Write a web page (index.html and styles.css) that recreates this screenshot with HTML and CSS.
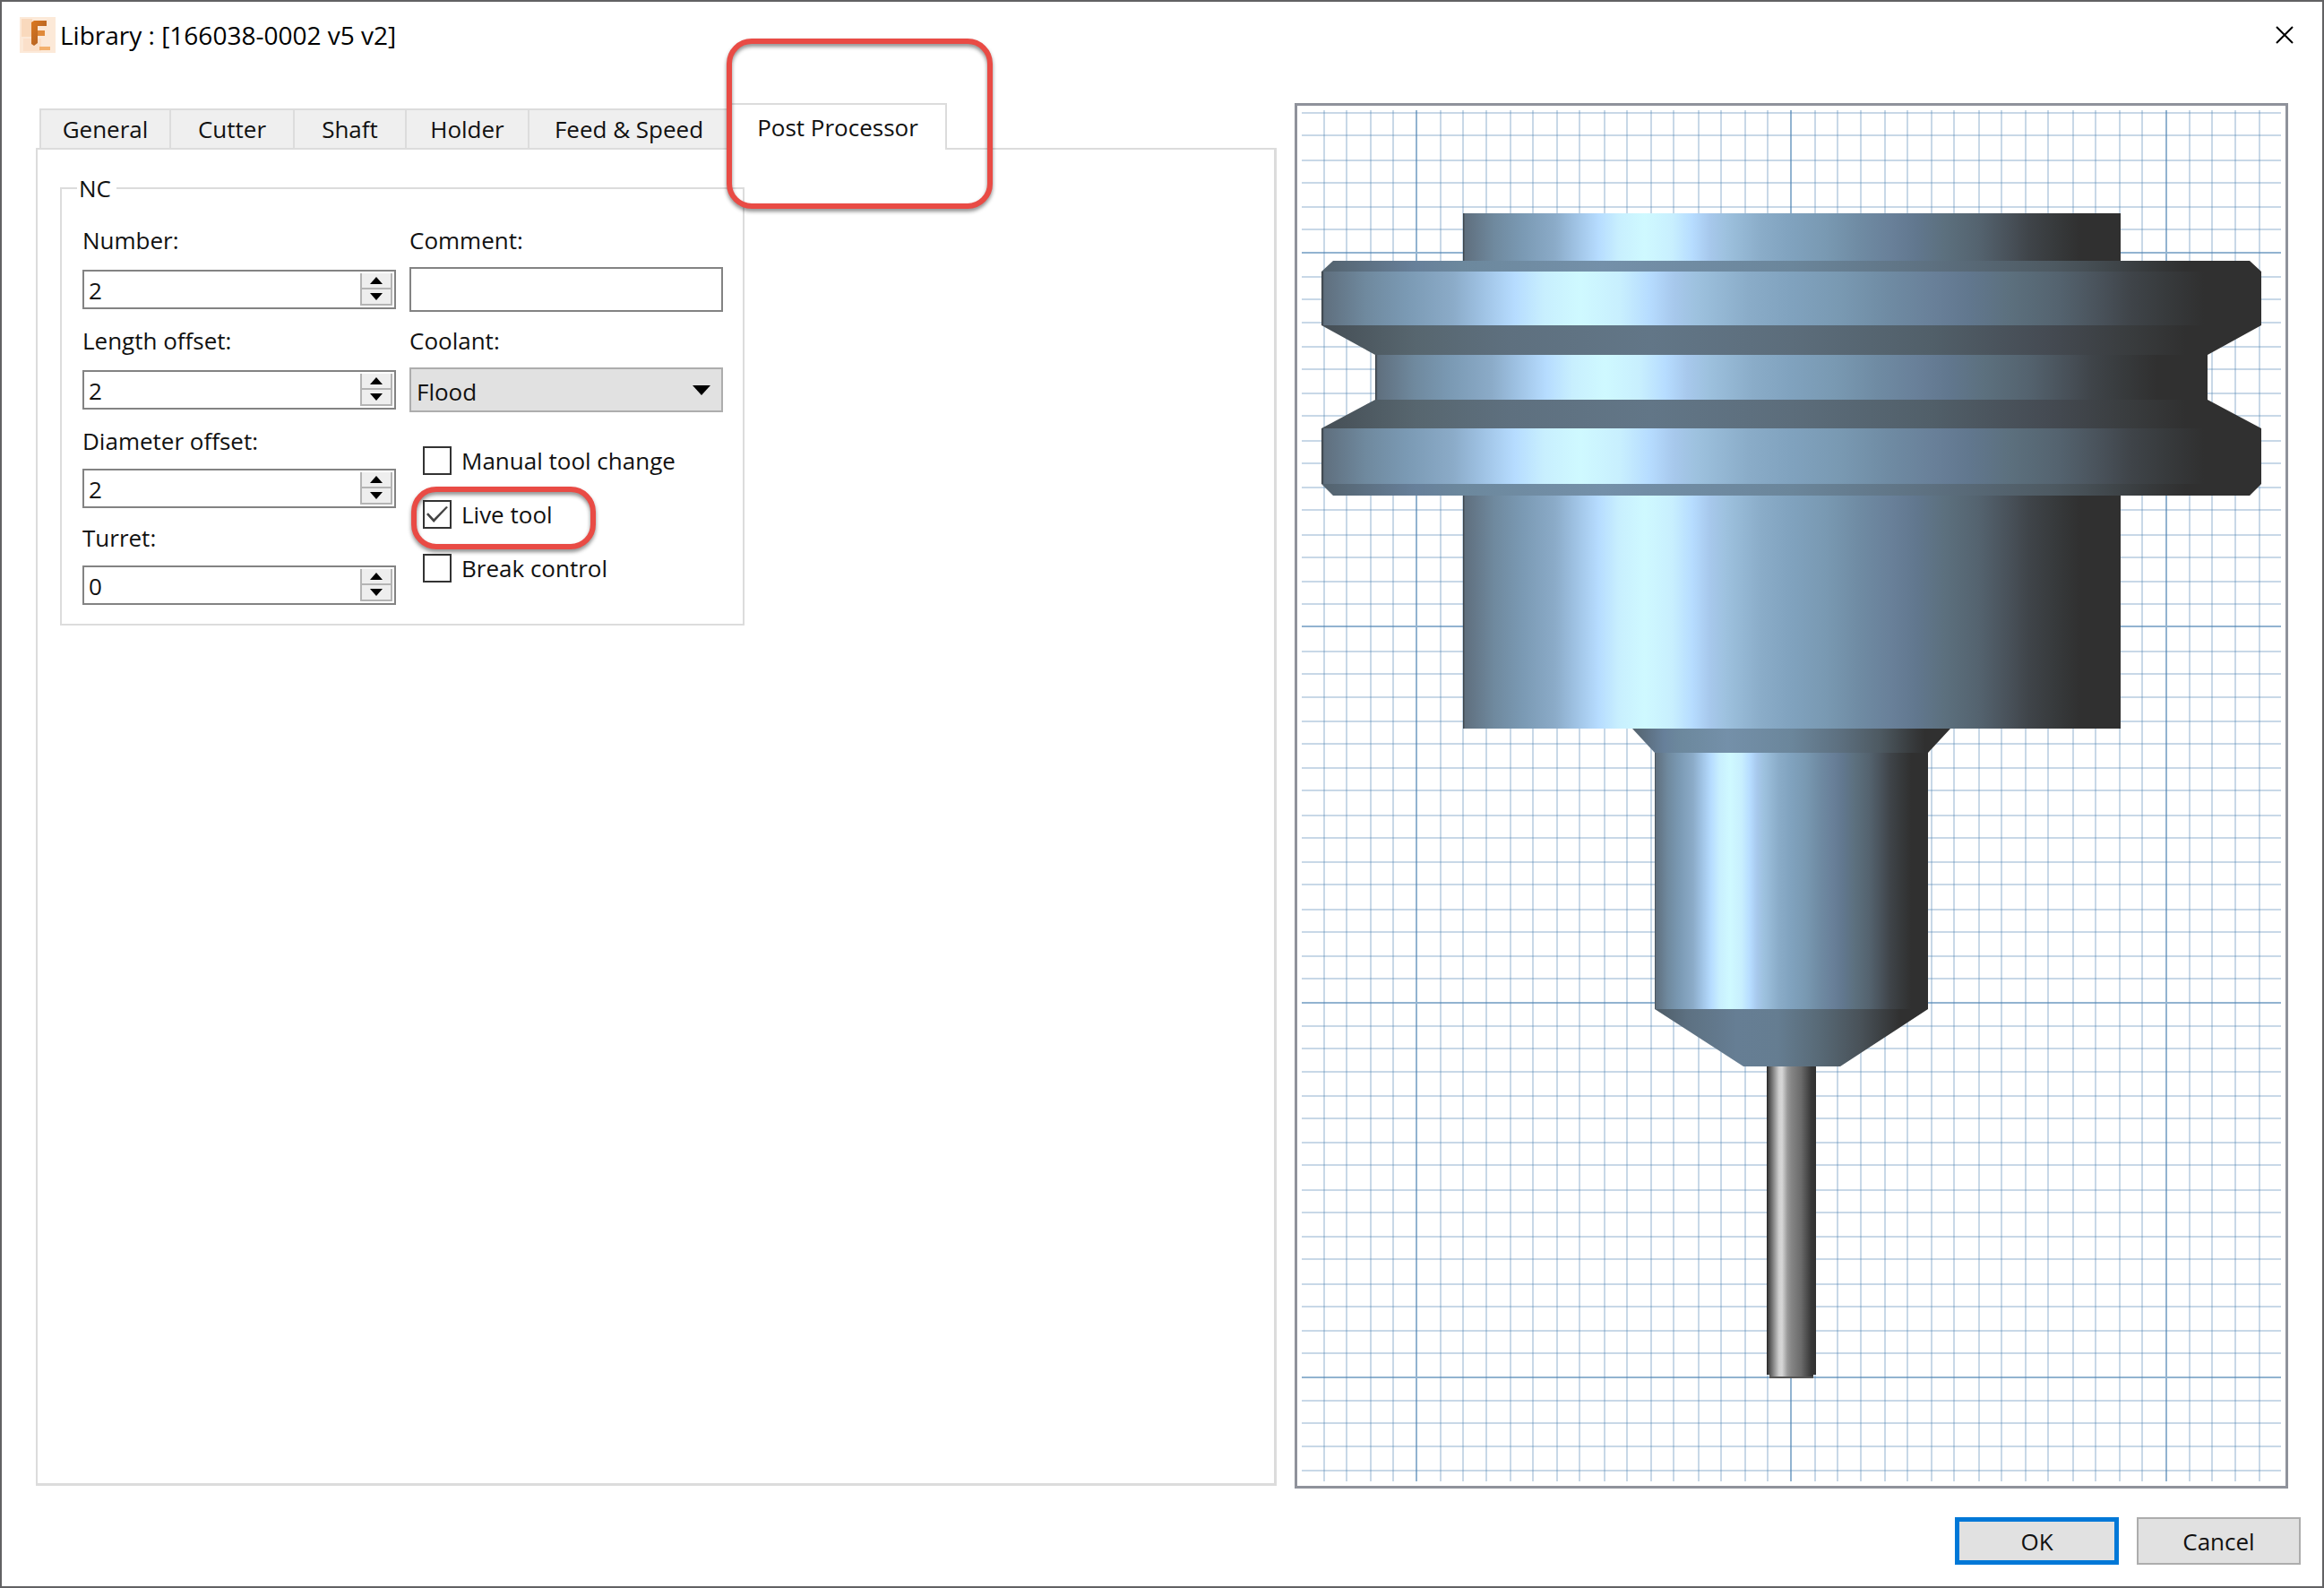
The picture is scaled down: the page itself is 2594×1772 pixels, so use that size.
FILE: index.html
```html
<!DOCTYPE html>
<html lang="en">
<head>
<meta charset="utf-8">
<title>Library : [166038-0002 v5 v2]</title>
<link rel="stylesheet" href="styles.css">
</head>
<body>
<div class="window">
  <header class="titlebar">
    <svg class="app-icon" viewBox="0 0 40 40" aria-hidden="true">
      <defs>
        <linearGradient id="f" x1="0" y1="0" x2="1" y2="1">
          <stop offset="0" stop-color="#dd7a20"/><stop offset="1" stop-color="#a55a24"/>
        </linearGradient>
      </defs>
      <rect width="40" height="40" fill="#fce9d8"/>
      <path d="M2 2h12v20H2z" fill="#f9d9bd"/>
      <path d="M4 24h20v14H4z" fill="#fbe0ca"/>
      <path d="M13 6l3-2h14v6H20v5h8v6h-8v8l-4 3-3-2z" fill="url(#f)"/>
      <path d="M20 15h8v6h-8z" fill="#e08a3a"/>
      <path d="M22 33h12v4H22z" fill="#f3b06c"/>
    </svg>
    <h1 class="title">Library : [166038-0002 v5 v2]</h1>
    <button class="close" type="button" aria-label="Close">
      <svg viewBox="0 0 20 20"><path d="M1 1l18 18M19 1L1 19" fill="none" stroke="#000" stroke-width="2"/></svg>
    </button>
  </header>

  <main class="content">
    <section class="editor">
      <div class="tabs" role="tablist">
        <button class="tab" type="button" role="tab">General</button>
        <button class="tab" type="button" role="tab">Cutter</button>
        <button class="tab" type="button" role="tab">Shaft</button>
        <button class="tab" type="button" role="tab">Holder</button>
        <button class="tab" type="button" role="tab">Feed &amp; Speed</button>
        <button class="tab active marked" type="button" role="tab" aria-selected="true">Post Processor</button>
      </div>
      <div class="pane" role="tabpanel">
        <fieldset class="group">
          <legend>NC</legend>
          <div class="fields">
            <div class="field">
              <label for="number">Number:</label>
              <div class="control"><div class="spin"><input id="number" type="number" value="2"><div class="steps"><button type="button" class="up" aria-label="Increase"></button><button type="button" class="down" aria-label="Decrease"></button></div></div></div>
            </div>
            <div class="field">
              <label for="comment">Comment:</label>
              <div class="control"><input id="comment" class="text" type="text"></div>
            </div>
            <div class="field">
              <label for="length">Length offset:</label>
              <div class="control"><div class="spin"><input id="length" type="number" value="2"><div class="steps"><button type="button" class="up" aria-label="Increase"></button><button type="button" class="down" aria-label="Decrease"></button></div></div></div>
            </div>
            <div class="field">
              <label for="coolant">Coolant:</label>
              <div class="control drop"><select id="coolant"><option>Flood</option></select></div>
            </div>
            <div class="stack">
              <div class="field">
                <label for="diameter">Diameter offset:</label>
                <div class="control"><div class="spin"><input id="diameter" type="number" value="2"><div class="steps"><button type="button" class="up" aria-label="Increase"></button><button type="button" class="down" aria-label="Decrease"></button></div></div></div>
              </div>
              <div class="field">
                <label for="turret">Turret:</label>
                <div class="control"><div class="spin"><input id="turret" type="number" value="0"><div class="steps"><button type="button" class="up" aria-label="Increase"></button><button type="button" class="down" aria-label="Decrease"></button></div></div></div>
              </div>
            </div>
            <div class="checks">
              <label class="check"><input type="checkbox">Manual tool change</label>
              <label class="check marked"><input type="checkbox" checked>Live tool</label>
              <label class="check"><input type="checkbox">Break control</label>
            </div>
          </div>
        </fieldset>
      </div>
    </section>

    <section class="preview" aria-label="Tool preview">
      <svg class="drawing" viewBox="1452 123 1095 1530" preserveAspectRatio="xMidYMid slice">
        <defs>
          <pattern id="grid" patternUnits="userSpaceOnUse" x="1580" y="281" width="418" height="418">
            <path d="M28 0v418M53 0v418M79 0v418M106 0v418M131 0v418M158 0v418M183 0v418M211 0v418M236 0v418M263 0v418M288 0v418M316 0v418M341 0v418M368 0v418M393 0v418" stroke="#4a80b0" stroke-opacity=".3" stroke-width="2"/>
            <path d="M0 28h418M0 53h418M0 79h418M0 106h418M0 131h418M0 158h418M0 183h418M0 211h418M0 236h418M0 263h418M0 288h418M0 316h418M0 341h418M0 368h418M0 393h418" stroke="#4a80b0" stroke-opacity=".3" stroke-width="2"/>
          </pattern>
          <linearGradient id="steel">
            <stop offset="0" stop-color="#33383c"/><stop offset=".003" stop-color="#5f6f7e"/>
            <stop offset=".047" stop-color="#6f899e"/><stop offset=".089" stop-color="#7a99b3"/>
            <stop offset=".14" stop-color="#8babc8"/><stop offset=".167" stop-color="#9cbfe0"/>
            <stop offset=".206" stop-color="#b6dcff"/><stop offset=".237" stop-color="#c8effe"/>
            <stop offset=".276" stop-color="#cff9ff"/><stop offset=".318" stop-color="#c8effe"/>
            <stop offset=".349" stop-color="#b6dcff"/><stop offset=".375" stop-color="#a7c8ec"/>
            <stop offset=".4" stop-color="#9dc1de"/><stop offset=".454" stop-color="#8aacc8"/>
            <stop offset=".5" stop-color="#80a2be"/><stop offset=".552" stop-color="#7999b2"/>
            <stop offset=".603" stop-color="#6f8ba3"/><stop offset=".655" stop-color="#687f98"/>
            <stop offset=".69" stop-color="#61778e"/><stop offset=".732" stop-color="#5c707e"/>
            <stop offset=".784" stop-color="#54636f"/><stop offset=".835" stop-color="#474f57"/>
            <stop offset=".861" stop-color="#3f4449"/><stop offset=".9" stop-color="#373a3c"/>
            <stop offset=".939" stop-color="#303030"/>
          </linearGradient>
          <linearGradient id="groove">
            <stop offset="0" stop-color="#454e55"/><stop offset=".1" stop-color="#57666f"/>
            <stop offset=".2" stop-color="#5e707f"/><stop offset=".35" stop-color="#627687"/>
            <stop offset=".5" stop-color="#5c6d7b"/><stop offset=".65" stop-color="#515f69"/>
            <stop offset=".77" stop-color="#454b53"/><stop offset=".86" stop-color="#393c3e"/><stop offset=".92" stop-color="#303030"/>
          </linearGradient>
          <linearGradient id="bevel">
            <stop offset="0" stop-color="#53626d"/><stop offset=".1" stop-color="#67809a"/>
            <stop offset=".15" stop-color="#6c889d"/><stop offset=".3" stop-color="#7490a9"/>
            <stop offset=".5" stop-color="#6b869b"/><stop offset=".65" stop-color="#5d7080"/>
            <stop offset=".78" stop-color="#4d5961"/><stop offset=".88" stop-color="#373a3c"/><stop offset=".92" stop-color="#303030"/>
          </linearGradient>
          <linearGradient id="cone">
            <stop offset="0" stop-color="#4d5b66"/><stop offset=".12" stop-color="#5d7182"/>
            <stop offset=".3" stop-color="#667e94"/><stop offset=".45" stop-color="#657d91"/>
            <stop offset=".6" stop-color="#586a77"/><stop offset=".75" stop-color="#495259"/><stop offset=".9" stop-color="#303030"/>
          </linearGradient>
          <linearGradient id="shank">
            <stop offset="0" stop-color="#222"/><stop offset=".04" stop-color="#484848"/>
            <stop offset=".12" stop-color="#7c7c7c"/><stop offset=".25" stop-color="#cfcfcf"/>
            <stop offset=".31" stop-color="#d6d6d6"/><stop offset=".42" stop-color="#999"/>
            <stop offset=".5" stop-color="#858585"/><stop offset=".7" stop-color="#6a6a6a"/>
            <stop offset=".9" stop-color="#383838"/><stop offset="1" stop-color="#303030"/>
          </linearGradient>
        </defs>
        <rect x="1452" y="123" width="1095" height="1530" fill="url(#grid)"/>
        <path d="M1581 123v1530M1999 123v1530M2418 123v1530M1452 282h1095M1452 699h1095M1452 1119h1095M1452 1537h1095" stroke="#4a80b0" stroke-opacity=".6" stroke-width="2"/>
        <path d="M1972 1189h55v345h-3v4h-49v-4h-3z" fill="url(#shank)"/>
        <path d="M1975 1536h49v2h-49z" fill="#555"/>
        <path d="M1633 238h734v53h-734zM1633 553h734v260h-734z" fill="url(#steel)"/>
        <path d="M1488 291h1023l13 12H1475zM1475 540h1049l-13 13H1488z" fill="url(#bevel)"/>
        <path d="M1475 303h1049v60H1475zM1475 478h1049v62H1475z" fill="url(#steel)"/>
        <path d="M1475 363h1049l-60 33h-929zM1535 446h929l60 32H1475z" fill="url(#groove)"/>
        <path d="M1535 396h929v50h-929z" fill="url(#steel)"/>
        <path d="M1822 813h355l-25 27h-305z" fill="url(#bevel)"/>
        <path d="M1847 840h305v286h-305z" fill="url(#steel)"/>
        <path d="M1847 1126h305l-98 64h-108z" fill="url(#cone)"/>
      </svg>
    </section>
  </main>

  <footer class="actions">
    <button class="action primary" type="button">OK</button>
    <button class="action" type="button">Cancel</button>
  </footer>
</div>
</body>
</html>
```
FILE: styles.css
```css
* { box-sizing: border-box; }

body {
  margin: 0;
  background: #fff;
  color: #111;
  font: 26px/36px "Open Sans", "Noto Sans", sans-serif;
}

button, input, select { font: inherit; color: inherit; margin: 0; }

.window {
  display: flex;
  flex-direction: column;
  min-height: 100vh;
  border: 2px solid #626264;
}

.titlebar {
  display: flex;
  align-items: center;
  height: 74px;
  margin-bottom: 39px;
  padding: 0 32px 0 20px;
}

.app-icon { width: 40px; height: 40px; }

.title {
  flex: 1;
  margin: 0 0 0 5px;
  color: #000;
  font-size: 28px;
  font-weight: 400;
}

.close { display: flex; padding: 0; border: 0; background: none; }
.close svg { width: 20px; height: 20px; }

.content {
  flex: 1;
  display: grid;
  grid-template-columns: 1385fr 1109fr;
  gap: 20px;
  padding: 0 38px;
}

.editor { display: flex; flex-direction: column; padding-bottom: 3px; }

.tabs {
  display: grid;
  grid-template-columns: 145px 138px 125px 137px 224px 244px;
  align-items: end;
  height: 52px;
  padding-left: 4px;
}

.tab {
  height: 46px;
  padding: 0;
  border: 2px solid #dcdcdc;
  border-right: 0;
  background: #efefef;
}

.tab.active {
  position: relative;
  z-index: 1;
  height: 52px;
  border-right: 2px solid #dcdcdc;
  border-bottom: 0;
  background: #fff;
}

.pane {
  flex: 1;
  margin-top: -2px;
  border: 2px solid #dcdcdc;
  border-right-width: 3px;
  border-bottom-width: 3px;
}

/* Red call-out frame drawn over a control */
.marked { position: relative; }
.marked::after {
  content: "";
  position: absolute;
  border: 6px solid #e94b45;
  border-radius: 28px;
  filter: drop-shadow(0 3px 2px rgba(0, 0, 0, .45));
  pointer-events: none;
}
.tab.marked::after { inset: -74px -53px -66px -4px; }
.check.marked::after { inset: -1px 142px -9px -13px; }

.group {
  width: 764px;
  margin: 25px;
  padding: 22px 22px 18px 23px;
  border: 2px solid #dcdcdc;
}

.group legend { margin-left: -6px; padding: 0 6px 0 2px; }

.fields { display: grid; grid-template-columns: 350px 350px; gap: 14px 15px; }

.field { display: flex; flex-direction: column; gap: 12px; min-width: 0; }
.stack { display: flex; flex-direction: column; gap: 12px; min-width: 0; }
.stack .field { gap: 10px; }

.control { position: relative; display: flex; align-items: center; height: 50px; }

.spin {
  display: flex;
  flex: 1;
  min-width: 0;
  height: 44px;
  padding: 2px;
  border: 2px solid #838383;
}

.spin input {
  flex: 1;
  width: 100%;
  min-width: 0;
  padding: 2px 0 0 3px;
  border: 0;
  outline: 0;
  background: none;
  appearance: textfield;
}
.spin input::-webkit-inner-spin-button { appearance: none; }

.steps { display: flex; flex: none; flex-direction: column; width: 36px; background: #ececec; }
.steps button {
  display: grid;
  place-items: center;
  flex: 1;
  padding: 0;
  border: 2px solid #b4b4b4;
  border-top: 0;
  background: #eee;
}
.steps button::before {
  content: "";
  width: 14px;
  height: 8px;
  background: #000;
  clip-path: polygon(50% 0, 100% 100%, 0 100%);
}
.steps .down::before { clip-path: polygon(0 0, 100% 0, 50% 100%); }

.text { width: 100%; height: 50px; border: 2px solid #838383; background: #fff; }

.drop select {
  width: 100%;
  height: 50px;
  padding: 4px 6px 0;
  border: 2px solid #adadad;
  border-radius: 0;
  background: #e1e1e1;
  appearance: none;
}
.drop::after {
  content: "";
  position: absolute;
  top: 20px;
  right: 14px;
  width: 20px;
  height: 11px;
  background: #000;
  clip-path: polygon(0 0, 100% 0, 50% 100%);
  pointer-events: none;
}

.checks { display: flex; flex-direction: column; padding: 10px 0 0 15px; }

.check { display: flex; align-items: center; gap: 11px; height: 60px; }

.check input {
  display: grid;
  place-items: center;
  width: 32px;
  height: 32px;
  border: 2px solid #333;
  background: #fff;
  appearance: none;
}
.check input:checked::before {
  content: "";
  width: 24px;
  height: 18px;
  background: #444;
  clip-path: polygon(0 50%, 8% 40%, 34% 78%, 92% 0, 100% 6%, 34% 100%);
}

.preview { display: flex; padding: 5px; border: 3px solid #8f929b; }
.drawing { flex: 1; width: 100%; min-width: 0; }

.actions {
  display: flex;
  justify-content: flex-end;
  gap: 20px;
  padding: 32px 24px 24px;
}

.action {
  width: 183px;
  height: 53px;
  padding: 0;
  border: 2px solid #adadad;
  background: #e1e1e1;
}
.action.primary { border: 5px solid #0078d7; }
```
